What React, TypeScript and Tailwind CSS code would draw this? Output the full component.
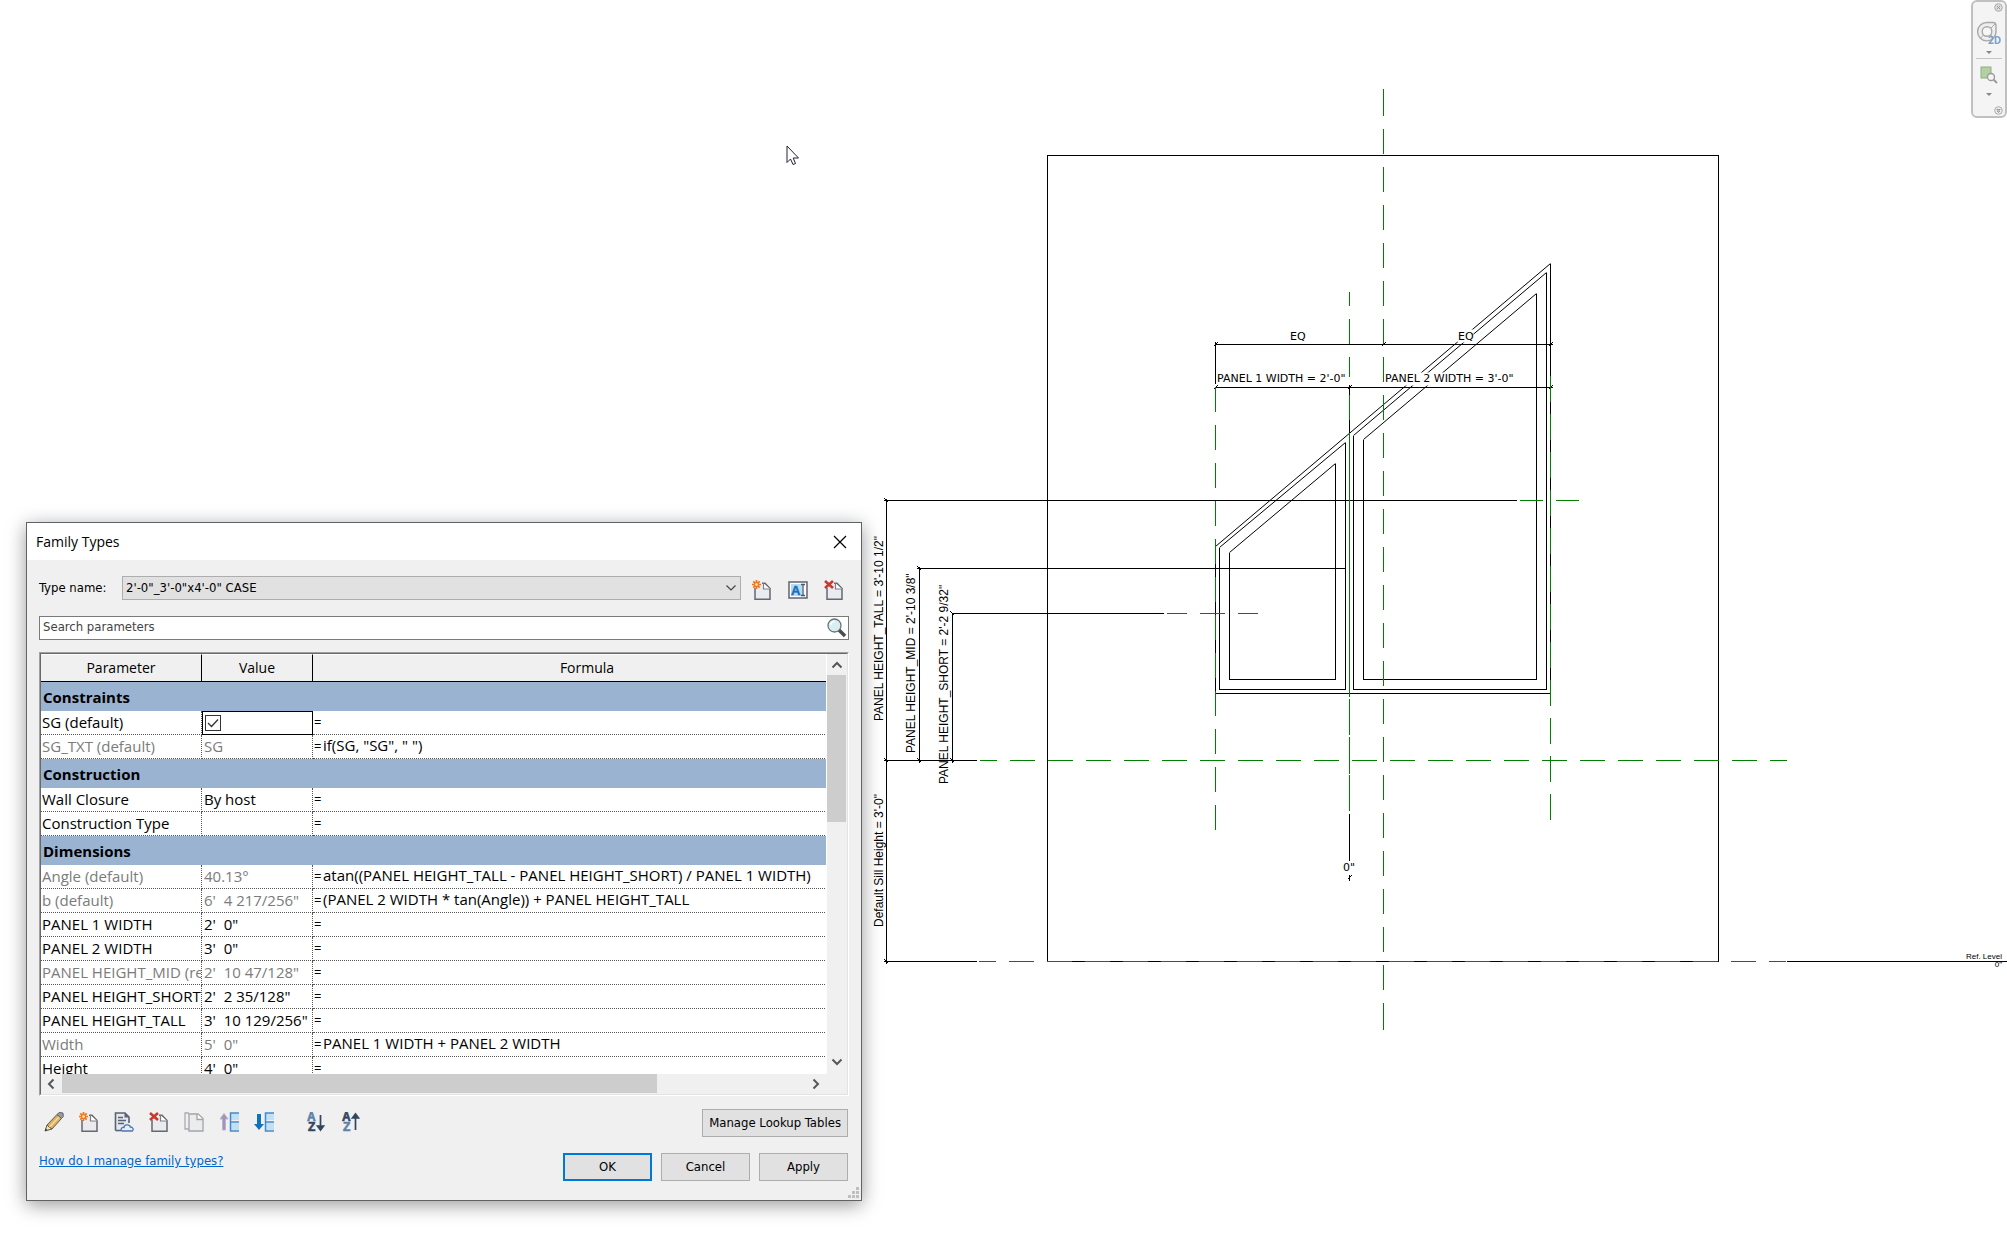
import type { ReactNode } from 'react';

type ParamRow = {
  name: string;
  value?: string;
  formula?: string;
  muted?: boolean;
  checkbox?: boolean;
};

const GROUPS: { title: string; rows: ParamRow[] }[] = [
  {
    title: 'Constraints',
    rows: [
      { name: 'SG (default)', checkbox: true },
      { name: 'SG_TXT (default)', value: 'SG', formula: 'if(SG, "SG", " ")', muted: true },
    ],
  },
  {
    title: 'Construction',
    rows: [{ name: 'Wall Closure', value: 'By host' }, { name: 'Construction Type' }],
  },
  {
    title: 'Dimensions',
    rows: [
      {
        name: 'Angle (default)',
        value: '40.13°',
        formula: 'atan((PANEL HEIGHT_TALL - PANEL HEIGHT_SHORT) / PANEL 1 WIDTH)',
        muted: true,
      },
      { name: 'b (default)', value: '6\'  4 217/256"', formula: '(PANEL 2 WIDTH * tan(Angle)) + PANEL HEIGHT_TALL', muted: true },
      { name: 'PANEL 1 WIDTH', value: '2\'  0"' },
      { name: 'PANEL 2 WIDTH', value: '3\'  0"' },
      { name: 'PANEL HEIGHT_MID (re', value: '2\'  10 47/128"', muted: true },
      { name: 'PANEL HEIGHT_SHORT', value: '2\'  2 35/128"' },
      { name: 'PANEL HEIGHT_TALL', value: '3\'  10 129/256"' },
      { name: 'Width', value: '5\'  0"', formula: 'PANEL 1 WIDTH + PANEL 2 WIDTH', muted: true },
      { name: 'Height', value: '4\'  0"' },
    ],
  },
];

/* ---------- icons ---------- */

function Icon({ children }: { children: ReactNode }) {
  return (
    <svg width="20" height="20" viewBox="0 0 20 20" fill="none" aria-hidden="true">
      {children}
    </svg>
  );
}

function Page() {
  return (
    <>
      <path d="M3 5h9l6 5v9.200H3z" fill="#e9ebf0" />
      <path d="M3 8v11.200h15V8.500L13 3.200h-3" stroke="#66686f" strokeWidth="1.500" />
      <path d="M11.500 3.500v5.500H18" stroke="#7d8088" strokeWidth="1.200" fill="#fff" />
    </>
  );
}

function NewIcon() {
  return (
    <Icon>
      <Page />
      <path d="M4.500 0v9M0 4.500h9M1.300 1.300l6.400 6.400M7.700 1.300L1.300 7.700" stroke="#e8731c" strokeWidth="1.700" />
      <circle cx="4.500" cy="4.500" r="2" fill="#ffd9a0" stroke="#e8731c" />
    </Icon>
  );
}

function DeleteIcon() {
  return (
    <Icon>
      <Page />
      <path d="M1 1l8 7M9 1L1 8" stroke="#c8382f" strokeWidth="2.600" />
    </Icon>
  );
}

function RenameIcon() {
  return (
    <Icon>
      <rect x="1" y="2" width="18" height="16" fill="#fff" stroke="#5d6470" strokeWidth="1.500" />
      <rect x="3" y="4" width="11" height="12" fill="#b5dcf3" />
      <text x="3" y="15" fontSize="13" fontWeight="700" fontFamily="Liberation Sans, sans-serif" fill="#1d6fc0" stroke="#1d6fc0" strokeWidth=".5">A</text>
      <path d="M13 4.500h4M13 15.500h4M15 4.500v11" stroke="#4e5666" strokeWidth="1.300" />
    </Icon>
  );
}

function PencilIcon() {
  return (
    <Icon>
      <path d="M1 19l2-6 5 4z" fill="#f2dfb9" stroke="#5b5648" />
      <path d="M3 13L13 2.500l4.500 4L8 17z" fill="#d9b069" stroke="#6a5b3c" />
      <path d="M5.500 15L15.500 4.500" stroke="#f7dc98" strokeWidth="1.500" />
      <path d="M13 2.500l2-2 4 .5.300 3.500-1.800 2z" fill="#9a9ca3" stroke="#5f6168" />
      <path d="M1 19l.7-2.500 1.600 1.500z" fill="#333" />
    </Icon>
  );
}

function EditDocIcon() {
  return (
    <Icon>
      <path d="M1.500 18.500V1H11l4 4v6" fill="#e4e8ee" stroke="#586272" strokeWidth="1.600" />
      <path d="M10.500 1v4.500H15z" fill="#586272" />
      <path d="M1.500 18.500H7" stroke="#586272" strokeWidth="1.600" />
      <path d="M4 5.500h5M4 8.500h8M4 11.500h6" stroke="#586272" strokeWidth="1.500" />
      <path d="M8 19c-2-2 0-4 2-3.500 0-3.500 6-3.500 6.300-.500 3 0 3.500 3 2 4z" fill="#e6effb" stroke="#4b74b5" strokeWidth="1.300" />
    </Icon>
  );
}

function CopyIcon() {
  return (
    <Icon>
      <path d="M5 1H1v16h4" stroke="#a9abaf" strokeWidth="1.300" />
      <path d="M5 2h9l5 4.500V19H5z" fill="#ebecee" stroke="#a2a4a8" strokeWidth="1.300" />
      <path d="M13 2v5.500h6" fill="#fff" stroke="#a2a4a8" strokeWidth="1.300" />
    </Icon>
  );
}

function ListBlocks() {
  return (
    <>
      <rect x="12" y="1" width="8" height="7" fill="#bfe0f5" />
      <rect x="12" y="11" width="8" height="7" fill="#bfe0f5" />
      <path d="M20 1h-8.500v18H20M11.500 10H20" stroke="#4489c9" strokeWidth="1.500" />
    </>
  );
}

function MoveUpIcon() {
  return (
    <Icon>
      <path d="M5 1.500L1 7h2.500v11h3V7H9z" fill="#9c9aa5" stroke="#c3a9e2" />
      <ListBlocks />
    </Icon>
  );
}

function MoveDownIcon() {
  return (
    <Icon>
      <path d="M5 18L0 12h3V2h4v10h3z" fill="#1272b8" />
      <ListBlocks />
    </Icon>
  );
}

function SortIcon({ up = false }: { up?: boolean }) {
  return (
    <Icon>
      <g fontSize="12" fontWeight="900" fontFamily="Liberation Sans, sans-serif" strokeWidth=".6">
        <text x="1" y="9" fill={up ? '#34455f' : '#5d81aa'} stroke={up ? '#34455f' : '#5d81aa'}>A</text>
        <text x="2" y="19" fill={up ? '#5d81aa' : '#34455f'} stroke={up ? '#5d81aa' : '#34455f'}>Z</text>
      </g>
      {up ? (
        <path d="M14.500 18V3M11.500 6l3-4 3 4z" stroke="#34455f" strokeWidth="1.700" fill="#34455f" />
      ) : (
        <path d="M14.500 3v14M11.500 14l3 4 3-4z" stroke="#34455f" strokeWidth="1.700" fill="#34455f" />
      )}
    </Icon>
  );
}

function SearchIcon() {
  return (
    <Icon>
      <path d="M12 12l6 6" stroke="#4a4d50" strokeWidth="3.500" />
      <circle cx="7.500" cy="7.500" r="6.500" fill="#d8eef0" stroke="#66757a" strokeWidth="1.300" />
      <path d="M4 7c0-2 1.500-3.500 3.500-3.500" stroke="#fff" strokeWidth="1.500" />
    </Icon>
  );
}

function Chevron({ d }: { d: string }) {
  return (
    <svg width="12" height="12" viewBox="0 0 12 12" fill="none" aria-hidden="true">
      <path d={d} stroke="#55585b" strokeWidth="2" />
    </svg>
  );
}

/* ---------- dialog ---------- */

function IconButton({ label, children }: { label: string; children: ReactNode }) {
  return (
    <button type="button" aria-label={label} className="flex h-5 w-5 items-center justify-center">
      {children}
    </button>
  );
}

function PushButton({ children, primary = false }: { children: ReactNode; primary?: boolean }) {
  return (
    <button
      type="button"
      className={
        primary
          ? 'h-7 w-[89px] border-2 border-[#0078d7] bg-[#e1e1e1]'
          : 'h-7 min-w-[89px] border border-[#adadad] bg-[#e1e1e1] px-[6px]'
      }
    >
      {children}
    </button>
  );
}

function ParameterRow({ row }: { row: ParamRow }) {
  const tone = row.muted ? 'text-[#7b7b7b]' : 'text-black';
  return (
    <tr className="h-6">
      <td className={`overflow-hidden border-r border-b border-dotted border-[#555] pb-[2px] pl-px whitespace-nowrap ${tone}`}>
        {row.name}
      </td>
      {row.checkbox ? (
        <td className="border border-black px-[2px]">
          <label className="relative flex h-4 w-4">
            <input
              type="checkbox"
              defaultChecked
              aria-label={row.name}
              className="peer h-4 w-4 appearance-none border border-[#333] bg-white"
            />
            <svg className="absolute inset-0 hidden peer-checked:block" width="16" height="16" viewBox="0 0 16 16" fill="none">
              <path d="M3 8l3.500 3.500L13 4.500" stroke="#333" strokeWidth="1.300" />
            </svg>
          </label>
        </td>
      ) : (
        <td className={`border-r border-b border-dotted border-[#555] pb-[2px] pl-[2px] whitespace-pre ${tone}`}>{row.value}</td>
      )}
      <td className="border-b border-dotted border-[#555] pb-[2px] pl-px whitespace-nowrap">
        <span className="inline-block w-[9px] text-[13px]">=</span>
        {row.formula}
      </td>
    </tr>
  );
}

function ParameterTable() {
  return (
    <div className="mt-3 border-t border-r border-b border-l border-t-[#a0a0a0] border-r-white border-b-white border-l-[#a0a0a0]">
      <div className="border border-t-[#696969] border-r-[#e3e3e3] border-b-[#e3e3e3] border-l-[#696969]">
        <div className="flex">
          <div className="h-[420px] min-w-0 flex-1 overflow-hidden bg-white">
            <table className="w-[820px] table-fixed border-separate border-spacing-0 font-['Open_Sans',sans-serif] text-[15px] leading-5">
              <colgroup>
                <col className="w-[161px]" />
                <col className="w-[111px]" />
                <col />
              </colgroup>
              <thead className="text-sm">
                <tr className="h-7 bg-[#f0f0f0]">
                  <th className="border-t border-r border-b border-t-white border-r-black border-b-black font-normal">Parameter</th>
                  <th className="border-t border-r border-b border-t-white border-r-black border-b-black font-normal">Value</th>
                  <th className="border-t border-b border-t-white border-b-black font-normal">Formula</th>
                </tr>
              </thead>
              {GROUPS.map(group => (
                <tbody key={group.title}>
                  <tr className="h-[29px] bg-[#99b3d1]">
                    <th colSpan={3} className="pt-px pl-[2px] text-left font-bold">{group.title}</th>
                  </tr>
                  {group.rows.map(row => (
                    <ParameterRow key={row.name} row={row} />
                  ))}
                </tbody>
              ))}
            </table>
          </div>
          <div className="flex w-[21px] flex-col items-center border-l border-white bg-[#f0f0f0] pr-px">
            <div className="flex h-[21px] items-center"><Chevron d="M1.500 8.500L6 4l4.500 4.500" /></div>
            <div className="h-[147px] w-[19px] bg-[#cdcdcd]" />
            <div className="mt-auto flex h-6 items-center"><Chevron d="M1.500 3.500L6 8l4.500-4.500" /></div>
          </div>
        </div>
        <div className="flex h-5 items-start bg-[#f0f0f0] pr-[25px]">
          <div className="flex h-[19px] w-[21px] items-center justify-start pl-1"><Chevron d="M8.500 1.500L4 6l4.500 4.500" /></div>
          <div className="flex-1 pr-1"><div className="h-[19px] w-4/5 bg-[#cdcdcd]" /></div>
          <div className="flex h-[19px] items-center"><Chevron d="M3.500 1.500L8 6l-4.500 4.500" /></div>
        </div>
      </div>
    </div>
  );
}

function FamilyTypesDialog() {
  return (
    <section
      role="dialog"
      aria-label="Family Types"
      className="absolute top-[522px] left-[26px] w-[836px] border border-[#5f6366] bg-[#f0f0f0] text-black shadow-[0_4px_18px_rgba(0,0,0,0.4)]"
    >
      <header className="flex h-[37px] items-center justify-between bg-white pr-[13px] pl-[9px]">
        <h1 className="font-['Open_Sans',sans-serif] text-sm">Family Types</h1>
        <button type="button" aria-label="Close" className="flex h-4 w-4 items-center justify-center">
          <svg width="14" height="14" viewBox="0 0 14 14" fill="none">
            <path d="M1 1l12 12M13 1L1 13" stroke="#000" strokeWidth="1.200" />
          </svg>
        </button>
      </header>

      <div className="px-3 pt-4 pb-[19px] font-['DejaVu_Sans_Condensed','DejaVu_Sans',sans-serif] text-[13px]">
        <div className="flex h-6 items-center">
          <label htmlFor="type-name" className="w-[83px]">Type name:</label>
          <div className="relative flex-1">
            <select id="type-name" className="block h-6 w-full appearance-none border border-[#adadad] bg-[#e1e1e1] pl-[3px]">
              <option>2'-0"_3'-0"x4'-0" CASE</option>
            </select>
            <svg className="pointer-events-none absolute top-2 right-[5px]" width="10" height="8" viewBox="0 0 10 8" fill="none">
              <path d="M.5 1.500L5 6l4.500-4.500" stroke="#444" strokeWidth="1.200" />
            </svg>
          </div>
          <div className="mt-1 mr-[5px] ml-[11px] flex gap-4">
            <IconButton label="New type"><NewIcon /></IconButton>
            <IconButton label="Rename type"><RenameIcon /></IconButton>
            <IconButton label="Delete type"><DeleteIcon /></IconButton>
          </div>
        </div>

        <div className="mt-4 flex h-6 items-center border border-[#7a7a7a] bg-white pr-px">
          <input
            type="text"
            aria-label="Search parameters"
            placeholder="Search parameters"
            className="h-full flex-1 bg-transparent pb-1 pl-[3px] font-['DejaVu_Sans_Condensed','DejaVu_Sans',sans-serif] text-[13px] outline-none placeholder:text-[#444]"
          />
          <IconButton label="Search"><SearchIcon /></IconButton>
        </div>

        <ParameterTable />

        <div className="mt-[13px] flex h-7 items-center">
          <div className="flex gap-[15px] pb-[2px] pl-[5px]">
            <IconButton label="Edit parameter"><PencilIcon /></IconButton>
            <IconButton label="New parameter"><NewIcon /></IconButton>
            <IconButton label="Parameter properties"><EditDocIcon /></IconButton>
            <IconButton label="Delete parameter"><DeleteIcon /></IconButton>
            <IconButton label="Copy parameter"><CopyIcon /></IconButton>
            <IconButton label="Move parameter up"><MoveUpIcon /></IconButton>
            <IconButton label="Move parameter down"><MoveDownIcon /></IconButton>
          </div>
          <div className="ml-8 flex gap-[15px] pb-[2px]">
            <IconButton label="Sort ascending"><SortIcon /></IconButton>
            <IconButton label="Sort descending"><SortIcon up /></IconButton>
          </div>
          <div className="mr-px ml-auto flex"><PushButton>Manage Lookup Tables</PushButton></div>
        </div>

        <div className="mt-4 mr-px flex h-7 items-start justify-between">
          <a href="#help" className="leading-4 text-[#0066cc] underline">How do I manage family types?</a>
          <div className="flex gap-[9px]">
            <PushButton primary>OK</PushButton>
            <PushButton>Cancel</PushButton>
            <PushButton>Apply</PushButton>
          </div>
        </div>
      </div>

      <svg className="absolute right-[2px] bottom-[2px]" width="11" height="11" viewBox="0 0 11 11" fill="#bfbfbf">
        <path d="M8 0h3v3H8zM8 4h3v3H8zM4 4h3v3H4zM8 8h3v3H8zM4 8h3v3H4zM0 8h3v3H0z" />
      </svg>
    </section>
  );
}

/* ---------- drawing canvas ---------- */

const WHITE_GAPS = [
  { x: 1385, y: 372, w: 130, h: 13 },
  { x: 1457, y: 329, w: 16, h: 13 },
];

const ROTATED_LABELS = [
  { x: 883, y: 721, text: 'PANEL HEIGHT_TALL = 3\'-10 1/2"' },
  { x: 915, y: 753, text: 'PANEL HEIGHT_MID = 2\'-10 3/8"' },
  { x: 948, y: 784, text: 'PANEL HEIGHT_SHORT = 2\'-2 9/32"' },
  { x: 883, y: 927, text: 'Default Sill Height = 3\'-0"' },
];

function Elevation() {
  return (
    <svg className="absolute inset-0 h-full w-full" fill="none" role="img" aria-label="Window elevation">
      {/* sloped heads of the panels */}
      <g transform="translate(.5 .5)" stroke="#000">
        <path d="M1215 546L1550 263M1219 547L1345 442M1229 552L1335 463M1353 435L1546 272M1363 439L1536 293" />
        {WHITE_GAPS.map(gap => (
          <rect key={gap.y} x={gap.x} y={gap.y} width={gap.w} height={gap.h} fill="#fff" stroke="none" />
        ))}
      </g>

      <g transform="translate(.5 .5)" shapeRendering="crispEdges" stroke="#000">
        {/* wall outline, jambs and sills */}
        <rect x="1047" y="155" width="671" height="806" />
        <path d="M1550 263V693H1215V546" />
        <path d="M1345 442V689H1219V547M1335 463V679H1229V552" />
        <path d="M1546 272V689H1353V435M1536 293V679H1363V439" />
        <path d="M1349 384V690" />

        {/* dimension strings */}
        <path d="M1215 344H1552M1215 341V383M1550 341V383M1215 387H1552" />
        <path d="M883 500H1516M886 498V963M883 760H976M883 961H976" />
        <path d="M916 568H1345M919 566V762M951 613H1163M952 612V762" />
        <path d="M1349 813V860M1786 961H4000" />
        <path d="M1213 346l4-4M1381 346l4-4M1548 346l4-4M1213 389l4-4M1347 389l4-4M1548 389l4-4M1347 879l4-4M1349 874v6" />
        <path d="M884 498l4 4M884 758l4 4M884 959l4 4M917 566l4 4M917 758l4 4M950 611l4 4M950 758l4 4" />
      </g>

      {/* reference planes */}
      <g transform="translate(.5 0)" shapeRendering="crispEdges" stroke="#008000">
        <path d="M1383 89V116" />
        <path d="M1383 129V1030" strokeDasharray="25 13" />
        <path d="M1383 1027V1030" />
        <path d="M1349 292V306M1349 319V344M1349 357V377M1349 395V420" />
        <path d="M1349 433V697M1349 699V735M1349 737V774M1349 775V811" />
        <path d="M1215 387V831" strokeDasharray="25 13" />
        <path d="M1550 376V820" strokeDasharray="26 12" />
      </g>
      <g transform="translate(0 .5)" shapeRendering="crispEdges" stroke="#008000">
        <path d="M980 760H997M979 961H996" />
        <path d="M1010 760H1787" strokeDasharray="25 13" />
        <path d="M1009 961H1786" strokeDasharray="25 13" />
        <path d="M1520 500H1543M1556 500H1579M1167 613H1187M1200 613H1225M1238 613H1258" />
      </g>

      <g fill="#000" fontFamily="Liberation Sans, Arial, sans-serif" fontSize="12">
        {ROTATED_LABELS.map(label => (
          <text key={label.text} transform={`translate(${label.x} ${label.y}) rotate(-90)`}>{label.text}</text>
        ))}
      </g>
      <g fill="#000" fontFamily="DejaVu Sans, sans-serif" fontSize="11">
        <text x="1290" y="340">EQ</text>
        <text x="1458" y="340">EQ</text>
        <text x="1217" y="382">PANEL 1 WIDTH = 2'-0"</text>
        <text x="1385" y="382">PANEL 2 WIDTH = 3'-0"</text>
        <text x="1343" y="871">0"</text>
      </g>
    </svg>
  );
}

function NavigationBar() {
  return (
    <nav
      aria-label="Navigation bar"
      className="absolute top-0 right-0 flex h-[118px] w-9 flex-col items-center rounded-md border-2 border-[#c0c0c0] bg-[#f4f4f4] py-px"
    >
      <button type="button" aria-label="Close navigation bar" className="self-end pr-[2px]">
        <svg width="9" height="9" viewBox="0 0 9 9" fill="none">
          <circle cx="4.500" cy="4.500" r="3.800" fill="#ddd" stroke="#aaa" />
          <path d="M3 3l3 3M6 3L3 6" stroke="#999" />
        </svg>
      </button>
      <button type="button" aria-label="Steering wheel" className="mt-[9px]">
        <svg width="26" height="34" viewBox="0 0 26 34" fill="none">
          <path d="M11 1.500h6a3 3 0 0 1 3 3V11a9.200 9.200 0 1 1-9-9.500z" fill="#eee" stroke="#a8a8a8" strokeWidth="1.400" />
          <circle cx="11" cy="10.500" r="4.800" fill="#f6f6f6" stroke="#a8a8a8" strokeWidth="1.400" />
          <path d="M4.500 17l3-3M15 14l3 3M15 7l4-4" stroke="#a8a8a8" />
          <text x="12" y="23" fontSize="10" fontWeight="700" fontFamily="Open Sans, sans-serif" fill="#7b9fc8">2D</text>
          <path d="M10 30h6l-3 3z" fill="#888" />
        </svg>
      </button>
      <div className="mt-[3px] h-px w-[26px] bg-[#c4c4c4]" />
      <button type="button" aria-label="Zoom region" className="mt-[5px]">
        <svg width="26" height="33" viewBox="0 0 26 33" fill="none">
          <rect x="5" y="3" width="10" height="11" fill="#b5cfa4" stroke="#8fae80" />
          <circle cx="15" cy="13" r="3.500" fill="#f4f4f4" stroke="#999" strokeWidth="1.300" />
          <path d="M17.500 15.500l3.500 3.500" stroke="#999" strokeWidth="1.800" />
          <path d="M10 29h6l-3 3z" fill="#888" />
        </svg>
      </button>
      <button type="button" aria-label="Navigation bar options" className="mt-auto self-end pr-[2px]">
        <svg width="9" height="9" viewBox="0 0 9 9" fill="none">
          <circle cx="4.500" cy="4.500" r="3.800" fill="#eee" stroke="#aaa" />
          <path d="M2.500 3.500h4M3 5h3l-1.500 1.500z" stroke="#999" />
        </svg>
      </button>
    </nav>
  );
}

export default function App() {
  return (
    <main className="relative min-h-screen overflow-hidden bg-white">
      <Elevation />
      <div className="absolute top-[953px] right-[5px] text-right font-['Liberation_Sans',Arial,sans-serif] text-[8px] leading-2 text-black">
        <p>Ref. Level</p>
        <p>0"</p>
      </div>
      <NavigationBar />
      <FamilyTypesDialog />
      <svg className="absolute top-[145px] left-[786px]" width="14" height="21" viewBox="0 0 14 21" aria-hidden="true">
        <path d="M1 1v16.500l3.500-3.500 2.500 5.500 2.500-1-2.300-5.500H12.500z" fill="#fff" stroke="#223" />
      </svg>
    </main>
  );
}
